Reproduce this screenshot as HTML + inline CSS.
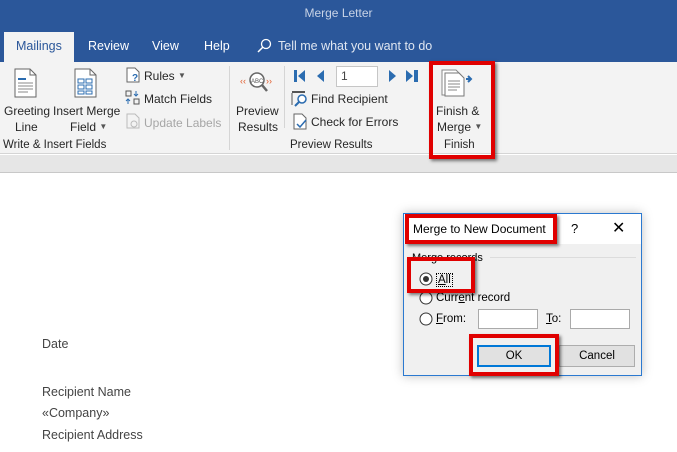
<!DOCTYPE html>
<html><head><meta charset="utf-8"><style>
*{margin:0;padding:0;box-sizing:border-box}
body{width:677px;height:452px;overflow:hidden;position:relative;font-family:"Liberation Sans",sans-serif;background:#fff;color:#262626}
.a{position:absolute;white-space:nowrap}
.t{font-size:12px;color:#262626}
.red{position:absolute;border:4px solid #e00000;box-shadow:2px 2px 3px rgba(0,0,0,.5)}
.dd{font-size:8px;color:#555;vertical-align:2px}
</style></head><body>
<div class="a" style="left:0;top:0;width:677px;height:62px;background:#2b579a"></div>
<div class="a" style="left:0;top:6px;width:677px;text-align:center;font-size:12px;color:#c8d3e6">Merge Letter</div>
<div class="a" style="left:4px;top:32px;width:70px;height:30px;background:#f3f3f3"></div>
<div class="a" style="left:16px;top:39px;font-size:12.5px;color:#2b579a">Mailings</div>
<div class="a" style="left:88px;top:39px;font-size:12.5px;color:#fff">Review</div>
<div class="a" style="left:152px;top:39px;font-size:12.5px;color:#fff">View</div>
<div class="a" style="left:204px;top:39px;font-size:12.5px;color:#fff">Help</div>
<svg class="a" style="left:256px;top:38px" width="16" height="16"><circle cx="10" cy="6" r="4.5" fill="none" stroke="#fff" stroke-width="1.3"/><line x1="7" y1="9" x2="2" y2="14" stroke="#fff" stroke-width="1.5"/></svg>
<div class="a" style="left:278px;top:39px;font-size:12.5px;color:#dfe6f1">Tell me what you want to do</div>
<div class="a" style="left:0;top:62px;width:677px;height:92px;background:#f3f3f3;border-bottom:1px solid #d5d5d5"></div>
<div class="a" style="left:0;top:155px;width:677px;height:18px;background:#e6e6e6;border-bottom:1px solid #c8c8c8"></div>
<svg class="a" style="left:14px;top:68px" width="24" height="30"><path d="M1 1h15l6 6v22H1z" fill="#fff" stroke="#666"/><path d="M16 1v6h6" fill="none" stroke="#666"/><rect x="4" y="10" width="8" height="2" fill="#2b6cb0"/><path d="M4 15h15M4 18h15M4 21h15M4 24h10" stroke="#888"/></svg>
<div class="a t" style="left:4px;top:104px">Greeting</div>
<div class="a t" style="left:15px;top:120px">Line</div>
<svg class="a" style="left:74px;top:68px" width="24" height="30"><path d="M1 1h15l6 6v22H1z" fill="#fff" stroke="#666"/><path d="M16 1v6h6" fill="none" stroke="#666"/><g fill="none" stroke="#2b6cb0"><rect x="4" y="11" width="6" height="4"/><rect x="12" y="11" width="6" height="4"/><rect x="4" y="17" width="6" height="4"/><rect x="12" y="17" width="6" height="4"/><rect x="4" y="23" width="6" height="3"/><rect x="12" y="23" width="6" height="3"/></g></svg>
<div class="a t" style="left:53px;top:104px">Insert Merge</div>
<div class="a t" style="left:70px;top:120px">Field <span class="dd">▼</span></div>
<svg class="a" style="left:126px;top:67px" width="14" height="16"><path d="M1 1h8l4 4v10H1z" fill="#fff" stroke="#666"/><text x="6" y="14" font-size="10" font-weight="bold" fill="#2b6cb0" font-family="Liberation Sans">?</text></svg>
<div class="a t" style="left:144px;top:69px">Rules <span class="dd">▼</span></div>
<svg class="a" style="left:125px;top:90px" width="16" height="16"><rect x="1" y="1" width="5" height="5" fill="none" stroke="#555"/><rect x="9" y="9" width="5" height="5" fill="none" stroke="#555"/><path d="M11 1v5M9 4l2 2 2-2M3 14V9M1 11l2-2 2 2" stroke="#2b6cb0" fill="none"/></svg>
<div class="a t" style="left:144px;top:92px">Match Fields</div>
<svg class="a" style="left:126px;top:113px" width="14" height="16"><path d="M1 1h8l4 4v10H1z" fill="none" stroke="#bbb"/><circle cx="8" cy="11" r="3" fill="none" stroke="#bbb"/></svg>
<div class="a t" style="left:144px;top:116px;color:#a6a6a6">Update Labels</div>
<div class="a t" style="left:3px;top:139px;font-size:11.5px">Write &amp; Insert Fields</div>
<div class="a" style="left:229px;top:66px;width:1px;height:84px;background:#d5d5d5"></div>
<svg class="a" style="left:240px;top:70px" width="34" height="26"><text x="0" y="14" font-size="9" fill="#e05a2b" font-family="Liberation Sans">‹‹</text><text x="26" y="14" font-size="9" fill="#e05a2b" font-family="Liberation Sans">››</text><circle cx="17" cy="10" r="7" fill="#fff" stroke="#666" stroke-width="1.5"/><text x="11" y="13" font-size="6" fill="#555" font-family="Liberation Sans">ABC</text><line x1="22" y1="15" x2="27" y2="21" stroke="#666" stroke-width="2.5"/></svg>
<div class="a t" style="left:236px;top:104px">Preview</div>
<div class="a t" style="left:238px;top:120px">Results</div>
<div class="a" style="left:284px;top:66px;width:1px;height:62px;background:#d5d5d5"></div>
<svg class="a" style="left:293px;top:69px" width="40" height="14"><path d="M1 1h3v12H1zM12 1v12L5 7z" fill="#2b6cb0"/><path d="M31 1v12L24 7z" fill="#2b6cb0"/></svg>
<svg class="a" style="left:388px;top:69px" width="10" height="14"><path d="M1 1v12l7-6z" fill="#2b6cb0"/></svg>
<svg class="a" style="left:405px;top:69px" width="16" height="14"><path d="M1 1v12l7-6zM9 1h4v12H9z" fill="#2b6cb0"/></svg>
<div class="a" style="left:336px;top:66px;width:42px;height:21px;background:#fff;border:1px solid #c6c6c6;font-size:12px;padding:2px 0 0 4px;color:#444">1</div>
<svg class="a" style="left:291px;top:90px" width="18" height="18"><path d="M1 2h13" stroke="#555" stroke-width="2"/><path d="M1 3v12" stroke="#555"/><circle cx="11" cy="9" r="4" fill="#fff" stroke="#2b6cb0" stroke-width="1.5"/><line x1="8" y1="12" x2="4" y2="16" stroke="#2b6cb0" stroke-width="2"/></svg>
<div class="a t" style="left:311px;top:92px">Find Recipient</div>
<svg class="a" style="left:293px;top:113px" width="16" height="18"><path d="M1 1h8l4 4v11H1z" fill="#fff" stroke="#666"/><path d="M4 11l3 3 6-7" fill="none" stroke="#2b6cb0" stroke-width="1.5"/></svg>
<div class="a t" style="left:311px;top:115px">Check for Errors</div>
<div class="a t" style="left:290px;top:139px;font-size:11.5px">Preview Results</div>
<svg class="a" style="left:441px;top:69px" width="34" height="28"><path d="M1 1h14l5 5v20H1z" fill="#fff" stroke="#888"/><path d="M4 4h14l5 5v18H4z" fill="#fff" stroke="#777"/><path d="M7 12h12M7 15h12M7 18h12M7 21h9" stroke="#888"/><path d="M25 10h5M27 7l3 3-3 3" stroke="#2b6cb0" stroke-width="2" fill="none"/></svg>
<div class="a t" style="left:436px;top:104px">Finish &amp;</div>
<div class="a t" style="left:437px;top:120px">Merge <span class="dd">▼</span></div>
<div class="a t" style="left:444px;top:139px;font-size:11.5px">Finish</div>
<div class="red" style="left:429px;top:61px;width:66px;height:98px"></div>
<div class="a t" style="left:42px;top:337px;font-size:12.5px;color:#444">Date</div>
<div class="a t" style="left:42px;top:385px;font-size:12.5px;color:#444">Recipient Name</div>
<div class="a t" style="left:42px;top:406px;font-size:12.5px;color:#444">«Company»</div>
<div class="a t" style="left:42px;top:428px;font-size:12.5px;color:#444">Recipient Address</div>
<div class="a" style="left:403px;top:213px;width:239px;height:163px;background:#f0f0f0;border:1px solid #2b79d0;box-shadow:0 0 10px rgba(0,0,0,.25)"></div>
<div class="a" style="left:404px;top:214px;width:237px;height:30px;background:#fff"></div>
<div class="a t" style="left:413px;top:222px;color:#000">Merge to New Document</div>
<div class="a t" style="left:571px;top:221px;color:#000;font-size:13px">?</div>
<div class="a" style="left:612px;top:218px;color:#000;font-size:16px">✕</div>
<div class="a t" style="left:412px;top:252px;font-size:11px;color:#000">Merge records</div>
<div class="a" style="left:490px;top:257px;width:146px;height:1px;background:#dcdcdc"></div>
<svg class="a" style="left:419px;top:272px" width="14" height="60"><circle cx="7" cy="7" r="6" fill="#fff" stroke="#333"/><circle cx="7" cy="7" r="3" fill="#333"/><circle cx="7" cy="26" r="6" fill="#fff" stroke="#333"/><circle cx="7" cy="47" r="6" fill="#fff" stroke="#333"/></svg>
<div class="a t" style="left:436px;top:273px;font-size:11.5px;color:#000;border:1px dotted #000;padding:0 1px"><u>A</u>ll</div>
<div class="a t" style="left:436px;top:292px;font-size:11.5px;color:#000">Curr<u>e</u>nt record</div>
<div class="a t" style="left:436px;top:313px;font-size:11.5px;color:#000"><u>F</u>rom:</div>
<div class="a" style="left:478px;top:309px;width:60px;height:20px;background:#fff;border:1px solid #aaa"></div>
<div class="a t" style="left:546px;top:313px;font-size:11.5px;color:#000"><u>T</u>o:</div>
<div class="a" style="left:570px;top:309px;width:60px;height:20px;background:#fff;border:1px solid #aaa"></div>
<div class="a" style="left:477px;top:345px;width:74px;height:22px;background:#e1e1e1;border:2px solid #0078d7;font-size:11.5px;text-align:center;line-height:18px;color:#000">OK</div>
<div class="a" style="left:559px;top:345px;width:76px;height:22px;background:#e1e1e1;border:1px solid #adadad;font-size:11.5px;text-align:center;line-height:20px;color:#000">Cancel</div>
<div class="red" style="left:405px;top:214px;width:152px;height:30px"></div>
<div class="red" style="left:407px;top:257px;width:68px;height:36px"></div>
<div class="red" style="left:469px;top:334px;width:90px;height:42px"></div>
</body></html>
